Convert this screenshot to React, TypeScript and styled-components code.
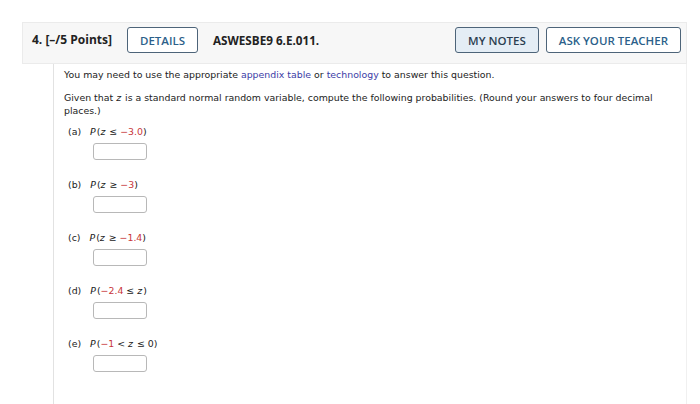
import React from "react";
import styled, { createGlobalStyle } from "styled-components";

const Global = createGlobalStyle`
  html, body { margin: 0; padding: 0; background: #ffffff; }
  body { font-family: "DejaVu Sans", Verdana, sans-serif; }
`;

const Page = styled.div`
  width: 700px;
  height: 404px;
  overflow: hidden;
  padding: 22px 13px 0 22px;
  box-sizing: border-box;
`;

const Header = styled.div`
  height: 42px;
  box-sizing: border-box;
  background: #f7f7f7;
  border: 1px solid #ebebeb;
  display: flex;
  align-items: flex-start;
  padding: 4px 5px 0 9px;
  font-family: "Open Sans", sans-serif;
`;

const QNum = styled.span`
  font-weight: 700;
  font-size: 12px;
  line-height: 26px;
  color: #222;
  margin-right: 15px;
`;

const Code = styled.span`
  font-weight: 700;
  font-size: 11.7px;
  line-height: 26px;
  color: #222;
  margin-left: 15px;
  flex: 1;
`;

const Btn = styled.button<{ $filled?: boolean; $blue?: boolean }>`
  height: 26px;
  box-sizing: border-box;
  padding: 0 12px;
  border: 1px solid #4d6479;
  border-radius: 3px;
  background: ${(p) => (p.$filled ? "#e4edf5" : "#ffffff")};
  color: ${(p) => (p.$blue ? "#2c5f8a" : "#2c3e50")};
  font-family: "Open Sans", sans-serif;
  font-weight: 600;
  font-size: 11.5px;
  cursor: pointer;
  & + & { margin-left: 7px; }
`;

const Body = styled.div`
  margin-left: 31px;
  border-left: 1px solid #e2e2e2;
  border-right: 1px solid #f0f0f0;
  height: 340px;
  padding: 4px 10px 0 10px;
  font-size: 9.4px;
  line-height: 13px;
  color: #222;
`;

const Para = styled.p`
  margin: 0 0 10px 0;
`;

const Line = styled.span`
  display: block;
`;

const Link = styled.span`
  color: #3c3ca6;
`;

const Var = styled.i`
  display: inline-block;
  font-style: italic;
  padding-right: 1px;
`;

const Item = styled.div`
  margin-left: 4px;
  margin-bottom: 18px;
  &:first-of-type { margin-top: -2px; }
`;

const Label = styled.div`
  display: flex;
  gap: 9px;
`;

const Red = styled.span`
  color: #c8363a;
`;

const Answer = styled.div`
  margin: 5px 0 0 25px;
  width: 54px;
  height: 17px;
  box-sizing: border-box;
  border: 1px solid #b8b8b8;
  border-radius: 3px;
  background: #fff;
`;

type Part = { k: string; expr: React.ReactNode };

const parts: Part[] = [
  { k: "(a)", expr: <><Var>P</Var>(<Var>z</Var> ≤ <Red>−3.0</Red>)</> },
  { k: "(b)", expr: <><Var>P</Var>(<Var>z</Var> ≥ <Red>−3</Red>)</> },
  { k: "(c)", expr: <><Var>P</Var>(<Var>z</Var> ≥ <Red>−1.4</Red>)</> },
  { k: "(d)", expr: <><Var>P</Var>(<Red>−2.4</Red> ≤ <Var>z</Var>)</> },
  { k: "(e)", expr: <><Var>P</Var>(<Red>−1</Red> &lt; <Var>z</Var> ≤ 0)</> },
];

export default function App() {
  return (
    <Page>
      <Global />
      <Header>
        <QNum>4. [–/5 Points]</QNum>
        <Btn $blue>DETAILS</Btn>
        <Code>ASWESBE9 6.E.011.</Code>
        <Btn $filled>MY NOTES</Btn>
        <Btn $blue>ASK YOUR TEACHER</Btn>
      </Header>
      <Body>
        <Para>
          You may need to use the appropriate <Link>appendix table</Link> or{" "}
          <Link>technology</Link> to answer this question.
        </Para>
        <Para>
          <Line>
            Given that <Var>z</Var> is a standard normal random variable, compute the
            following probabilities. (Round your answers to four decimal
          </Line>
          <Line>places.)</Line>
        </Para>
        {parts.map((p) => (
          <Item key={p.k}>
            <Label>
              <span>{p.k}</span>
              <span>{p.expr}</span>
            </Label>
            <Answer />
          </Item>
        ))}
      </Body>
    </Page>
  );
}
